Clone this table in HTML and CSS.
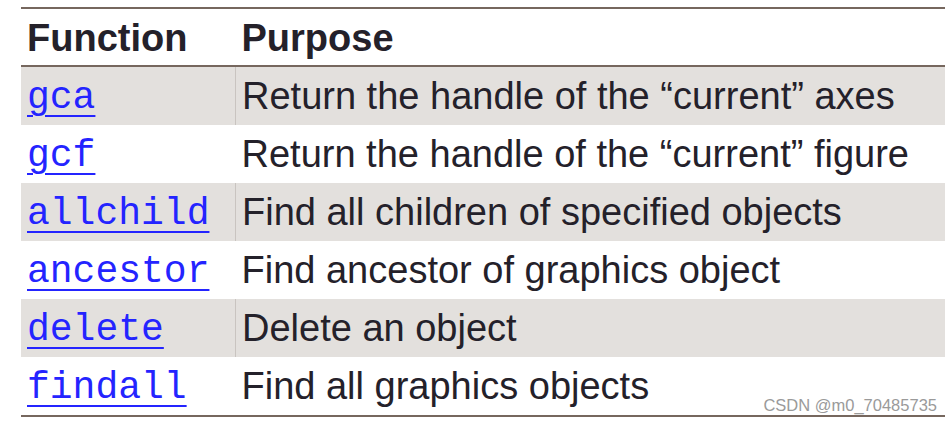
FILE: index.html
```html
<!DOCTYPE html>
<html>
<head>
<meta charset="utf-8">
<link rel="stylesheet" href="styles.css">
</head>
<body>
<div class="wrap">
<table class="fn-table">
  <thead>
    <tr><th class="c1">Function</th><th class="c2">Purpose</th></tr>
  </thead>
  <tbody>
    <tr class="shade"><td class="c1"><a href="#">gca</a></td><td class="c2">Return the handle of the “current” axes</td></tr>
    <tr><td class="c1"><a href="#">gcf</a></td><td class="c2">Return the handle of the “current” figure</td></tr>
    <tr class="shade"><td class="c1"><a href="#">allchild</a></td><td class="c2">Find all children of specified objects</td></tr>
    <tr><td class="c1"><a href="#">ancestor</a></td><td class="c2">Find ancestor of graphics object</td></tr>
    <tr class="shade"><td class="c1"><a href="#">delete</a></td><td class="c2">Delete an object</td></tr>
    <tr><td class="c1"><a href="#">findall</a></td><td class="c2">Find all graphics objects</td></tr>
  </tbody>
</table>
<div class="watermark">CSDN @m0_70485735</div>
</div>
</body>
</html>
```

FILE: styles.css
```css
html, body {
  margin: 0;
  padding: 0;
  background: #ffffff;
}
.wrap {
  position: relative;
  width: 952px;
  height: 424px;
  padding-top: 7px;
  box-sizing: border-box;
}
.fn-table {
  margin-left: 21px;
  width: 924px;
  border-collapse: collapse;
  font-family: "Liberation Sans", Arial, sans-serif;
  font-size: 38px;
  color: #24212a;
  border-top: 2px solid #76675e;
  border-bottom: 2px solid #76675e;
}
.fn-table th {
  height: 54px;
  padding: 2px 6px 0;
  text-align: left;
  font-weight: bold;
  vertical-align: middle;
  border-bottom: 2px solid #76675e;
}
.fn-table td {
  height: 57px;
  padding: 1px 6px 0;
  vertical-align: middle;
  white-space: nowrap;
}
.fn-table .c1 {
  width: 202px;
}
.fn-table tr.shade td {
  background: #e3e0dd;
}
.fn-table tr.shade td.c1 {
  border-right: 1px solid #c9c4c0;
}
.fn-table a {
  font-family: "Liberation Mono", "Courier New", monospace;
  color: #2424ff;
  text-decoration: underline;
  text-underline-offset: 7px;
  text-decoration-thickness: 2px;
}
.watermark {
  position: absolute;
  right: 15px;
  top: 396px;
  font-family: "Liberation Sans", Arial, sans-serif;
  font-size: 16.5px;
  color: #9a9a9a;
}
```
